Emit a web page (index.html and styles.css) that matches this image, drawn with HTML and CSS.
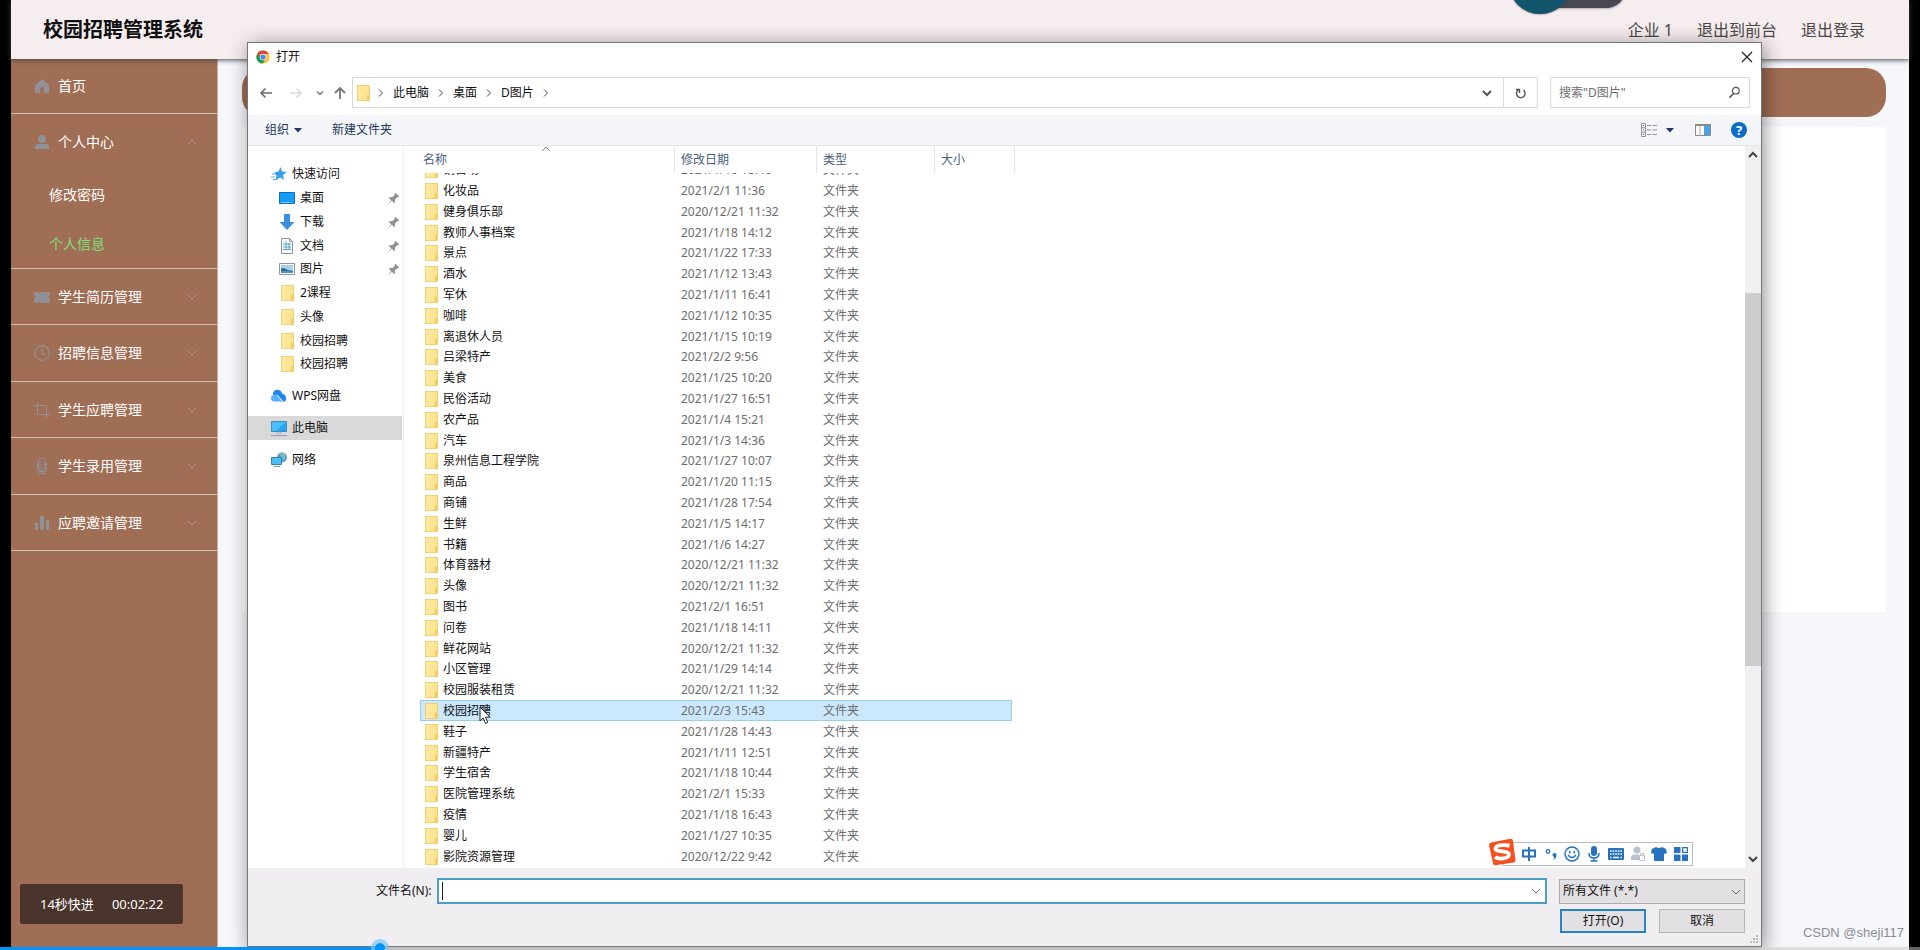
FILE: index.html
```html
<!DOCTYPE html>
<html lang="zh-CN">
<head>
<meta charset="utf-8">
<title>校园招聘管理系统</title>
<link rel="stylesheet" href="styles.css">
</head>
<body>
<svg class="defs" aria-hidden="true">
  <symbol id="down" viewBox="0 0 10 10"><path d="M1 3l4 4 4-4" fill="none" stroke="currentColor"/></symbol>
  <symbol id="up" viewBox="0 0 10 10"><path d="M1 7l4-4 4 4" fill="none" stroke="currentColor"/></symbol>
  <symbol id="right" viewBox="0 0 10 10"><path d="M3 1.500l3.500 3.500L3 8.500" fill="none" stroke="currentColor"/></symbol>
  <symbol id="tri" viewBox="0 0 10 10"><path d="M1 3h8L5 7.500z" fill="currentColor"/></symbol>
  <symbol id="pin" viewBox="0 0 12 12"><path d="M7.500.8l3.700 3.700-1 1-1-.2L7 7.500v2.800l-1 .7-2.200-2.200L.8 11.500l-.3-.3 2.700-3L1 6l.7-1h2.800L6.700 2.800l-.2-1z" fill="currentColor"/></symbol>
</svg>
<div class="site">
  <header class="topbar">
    <h1>校园招聘管理系统</h1>
    <nav class="account"><span>企业 1</span><a href="#">退出到前台</a><a href="#">退出登录</a></nav>
  </header>
  <div class="main">
    <aside class="sidebar">
      <ul class="menu">
        <li><a href="#" class="entry"><svg viewBox="0 0 16 16"><path d="M8 1L1 7v8h5v-4a2 2 0 014 0v4h5V7z" fill="currentColor"/></svg><span>首页</span></a></li>
        <li class="open">
          <a href="#" class="entry"><svg viewBox="0 0 16 16"><circle cx="8" cy="5" r="4" fill="currentColor"/><path d="M1 15v-2q0-3 3-3h8q3 0 3 3v2z" fill="currentColor"/></svg><span>个人中心</span><svg class="caret"><use href="#up"/></svg></a>
          <a href="#" class="sub">修改密码</a>
          <a href="#" class="sub active">个人信息</a>
        </li>
        <li><a href="#" class="entry"><svg viewBox="0 0 16 16"><path d="M0 3h4l1 2 1-2h10v3l-2 2 2 2v4H6l-1-2-1 2H0v-4l2-2-2-2z" fill="currentColor"/></svg><span>学生简历管理</span><svg class="caret"><use href="#down"/></svg></a></li>
        <li><a href="#" class="entry"><svg viewBox="0 0 16 16"><g fill="none" stroke="currentColor" stroke-width="1.200"><circle cx="8" cy="8" r="7.300"/><path d="M8 4v5h4"/></g></svg><span>招聘信息管理</span><svg class="caret"><use href="#down"/></svg></a></li>
        <li><a href="#" class="entry"><svg viewBox="0 0 16 16"><path d="M0 3.500h12.500V16M3.500 0v12.500H16" fill="none" stroke="currentColor"/></svg><span>学生应聘管理</span><svg class="caret"><use href="#down"/></svg></a></li>
        <li><a href="#" class="entry"><svg viewBox="0 0 16 16"><g fill="none" stroke="currentColor"><rect x="4.500" y=".5" width="7" height="12" rx="2"/><path d="M3.500 5v6q0 2.500 2.500 2.500h4q2.500 0 2.500-2.500V5M4.500 4h3M4.500 7h3M4.500 10h3M8.500 4h3M8.500 7h3M8.500 10h3M8 13v2.500M4 15.500h8"/></g></svg><span>学生录用管理</span><svg class="caret"><use href="#down"/></svg></a></li>
        <li><a href="#" class="entry"><svg viewBox="0 0 16 16"><path d="M1 8h3v7H1zM6 1h4v14H6zM12 5h3v10h-3z" fill="currentColor"/></svg><span>应聘邀请管理</span><svg class="caret"><use href="#down"/></svg></a></li>
      </ul>
    </aside>
    <main class="content">
      <div class="crumb-pill"></div>
      <div class="panel"></div>
    </main>
  </div>
</div>

<div class="widget"><span class="widget-dot"></span></div>

<section class="dialog" role="dialog" aria-label="打开">
  <div class="titlebar">
    <svg class="chrome" viewBox="0 0 16 16"><circle cx="8" cy="8" r="7.500" fill="#fbc332"/><path d="M1.500 4.200A7.500 7.500 0 007.500 15.500L10.800 10 8 8z" fill="#109d58"/><path d="M8 8L4.700 9.500 1.500 4.200A7.500 7.500 0 0114.600 4.500H8z" fill="#dc4437"/><circle cx="8" cy="8" r="3.700" fill="#f5f5f5"/><circle cx="8" cy="8" r="2.900" fill="#4a87ec"/></svg>
    <span>打开</span>
    <button class="close" aria-label="关闭"><svg viewBox="0 0 12 12"><path d="M1 1l10 10M11 1L1 11" stroke="#222" stroke-width="1.200"/></svg></button>
  </div>
  <div class="addressrow">
    <button class="nav-btn" aria-label="后退"><svg viewBox="0 0 14 14"><path d="M13 7H2M6.500 2.500L2 7l4.500 4.500" fill="none" stroke="#6b6b6b" stroke-width="1.600"/></svg></button>
    <button class="nav-btn" aria-label="前进"><svg viewBox="0 0 14 14"><path d="M1 7h11M7.500 2.500L12 7l-4.500 4.500" fill="none" stroke="#dadada" stroke-width="1.600"/></svg></button>
    <button class="nav-btn small" aria-label="历史"><svg viewBox="0 0 10 10"><path d="M2 3.500l3 3 3-3" fill="none" stroke="#777" stroke-width="1.500"/></svg></button>
    <button class="nav-btn" aria-label="上移"><svg viewBox="0 0 14 14"><path d="M7 13V2M2 7l5-5 5 5" fill="none" stroke="#777" stroke-width="1.800"/></svg></button>
    <div class="address">
      <span class="folder"></span><svg class="sep"><use href="#right"/></svg>
      <a href="#">此电脑</a><svg class="sep"><use href="#right"/></svg>
      <a href="#">桌面</a><svg class="sep"><use href="#right"/></svg>
      <a href="#">D图片</a><svg class="sep"><use href="#right"/></svg>
      <button class="drop" aria-label="以前的位置"><svg><use href="#down"/></svg></button>
      <button class="refresh" aria-label="刷新"><svg viewBox="0 0 12 12"><path d="M3.500 2.700A4.300 4.300 0 108.500 3M1 2.500h3.500V6" fill="none" stroke="#555" stroke-width="1.400"/></svg></button>
    </div>
    <div class="search">
      <input type="text" aria-label="搜索" placeholder="搜索&quot;D图片&quot;">
      <svg viewBox="0 0 14 14"><circle cx="8.500" cy="5" r="3.600" fill="none" stroke="#555" stroke-width="1.300"/><path d="M6 8l-4.500 4.500" stroke="#555" stroke-width="1.600"/></svg>
    </div>
  </div>
  <div class="toolbar">
    <button class="organize">组织<svg><use href="#tri"/></svg></button>
    <button>新建文件夹</button>
    <button class="view" aria-label="视图"><svg viewBox="0 0 16 14"><g fill="none" stroke="#909498"><path d="M.5.5h4v13h-4zM.5 4.800h4M.5 9.200h4M6 2.500h4M11.500 2.500H16M6 7h4M11.500 7H16M6 11.500h4M11.500 11.500H16"/></g><path d="M2 2h1v1H2zM2 11h1v1H2z" fill="#555"/><path d="M2 6.500h1v1H2z" fill="#d44"/></svg></button>
    <button class="viewdrop" aria-label="更多视图"><svg><use href="#tri"/></svg></button>
    <button class="preview" aria-label="预览窗格"><svg viewBox="0 0 16 12"><path d="M.5.5h15v11H.5z" fill="#fff" stroke="#8a8a8a"/><path d="M0 0h16v2H0z" fill="#8a8a8a"/><path d="M5 2v10" stroke="#aaa"/><path d="M9 2h6v9H9z" fill="#4aa3e8"/></svg></button>
    <button class="help" aria-label="帮助">?</button>
  </div>
  <div class="browser">
    <nav class="tree">
      <ul>
        <li class="root"><svg viewBox="0 0 16 16"><path d="M9.500 1l1.500 4.500 4.500.5-3.500 3 1 5-4-2.500L4.500 14.500l1-5L3 6.500l4.500-1z" fill="#35a0e8"/><path d="M1 8h4M0 11h4M2 13.500h3" stroke="#5db4ee"/></svg>快速访问</li>
        <li><svg viewBox="0 0 16 16"><path d="M.5 2.500h15v11H.5z" fill="#169bf9" stroke="#0b71bd"/><path d="M2 12.500h12" stroke="#84cbff" stroke-dasharray="9 1 1 1"/></svg>桌面<svg class="pin"><use href="#pin"/></svg></li>
        <li><svg viewBox="0 0 16 16"><path d="M5 0h6v8h4.500L8 16 .5 8H5z" fill="#3b8fdd"/></svg>下载<svg class="pin"><use href="#pin"/></svg></li>
        <li><svg viewBox="0 0 16 16"><path d="M2.500.5h8l3 3v12h-11z" fill="#fff" stroke="#8f9499"/><path d="M10.500.5v3h3" fill="none" stroke="#8f9499"/><path d="M4 6h8M4 9h8M4 11.500h8M7 3v9M10 5v7" stroke="#4aa7c8"/></svg>文档<svg class="pin"><use href="#pin"/></svg></li>
        <li><svg viewBox="0 0 16 16"><path d="M.5 2.500h15v11H.5z" fill="#fff" stroke="#8f9499"/><path d="M2 4h12v8H2z" fill="#a5d2f2"/><path d="M2 7q4 0 7 2l5 1v2H2z" fill="#376a80"/><path d="M2 10q6-1 12 1v1H2z" fill="#4c92c4"/></svg>图片<svg class="pin"><use href="#pin"/></svg></li>
        <li><span class="folder"></span>2课程</li>
        <li><span class="folder"></span>头像</li>
        <li><span class="folder"></span>校园招聘</li>
        <li><span class="folder"></span>校园招聘</li>
        <li class="root spaced"><svg viewBox="0 0 16 16"><path d="M2 7a4.500 4.500 0 019-1.500A5 5 0 0114 13.500H10L6 8z" fill="#2183ee"/><path d="M3 7q2-2 4 1l5 5.500H3.500A3.200 3.200 0 013 7" fill="#54b1ff"/><path d="M6 7l6 6.500" stroke="#fff"/></svg>WPS网盘</li>
        <li class="root spaced current"><svg viewBox="0 0 16 16"><path d="M.5 1.500h15v10H.5z" fill="#4abdfb" stroke="#438bb8"/><path d="M15 2v9H5z" fill="#26a5f4"/><path d="M0 15.500h16" stroke="#8c9fb5"/><path d="M5 13h6" stroke="#aab"/></svg>此电脑</li>
        <li class="root spaced"><svg viewBox="0 0 16 16"><circle cx="11" cy="5.500" r="5" fill="#5e9db4"/><path d="M9 2q3 1 2 4M12 1q2 3 1 7" stroke="#a7d9e8" fill="none"/><path d="M.5 5.500h10v7H.5z" fill="#49bdf7" stroke="#3482ae"/><path d="M3 14.500h6" stroke="#7695ab"/></svg>网络</li>
      </ul>
    </nav>
    <div class="listing">
      <svg class="sort"><use href="#up"/></svg>
      <table>
        <thead><tr><th>名称</th><th>修改日期</th><th>类型</th><th>大小</th></tr></thead>
        <tbody>
          <tr><td>销售场</td><td>2021/1/16 15:40</td><td>文件夹</td><td></td></tr>
          <tr><td>化妆品</td><td>2021/2/1 11:36</td><td>文件夹</td><td></td></tr>
          <tr><td>健身俱乐部</td><td>2020/12/21 11:32</td><td>文件夹</td><td></td></tr>
          <tr><td>教师人事档案</td><td>2021/1/18 14:12</td><td>文件夹</td><td></td></tr>
          <tr><td>景点</td><td>2021/1/22 17:33</td><td>文件夹</td><td></td></tr>
          <tr><td>酒水</td><td>2021/1/12 13:43</td><td>文件夹</td><td></td></tr>
          <tr><td>军休</td><td>2021/1/11 16:41</td><td>文件夹</td><td></td></tr>
          <tr><td>咖啡</td><td>2021/1/12 10:35</td><td>文件夹</td><td></td></tr>
          <tr><td>离退休人员</td><td>2021/1/15 10:19</td><td>文件夹</td><td></td></tr>
          <tr><td>吕梁特产</td><td>2021/2/2 9:56</td><td>文件夹</td><td></td></tr>
          <tr><td>美食</td><td>2021/1/25 10:20</td><td>文件夹</td><td></td></tr>
          <tr><td>民俗活动</td><td>2021/1/27 16:51</td><td>文件夹</td><td></td></tr>
          <tr><td>农产品</td><td>2021/1/4 15:21</td><td>文件夹</td><td></td></tr>
          <tr><td>汽车</td><td>2021/1/3 14:36</td><td>文件夹</td><td></td></tr>
          <tr><td>泉州信息工程学院</td><td>2021/1/27 10:07</td><td>文件夹</td><td></td></tr>
          <tr><td>商品</td><td>2021/1/20 11:15</td><td>文件夹</td><td></td></tr>
          <tr><td>商铺</td><td>2021/1/28 17:54</td><td>文件夹</td><td></td></tr>
          <tr><td>生鲜</td><td>2021/1/5 14:17</td><td>文件夹</td><td></td></tr>
          <tr><td>书籍</td><td>2021/1/6 14:27</td><td>文件夹</td><td></td></tr>
          <tr><td>体育器材</td><td>2020/12/21 11:32</td><td>文件夹</td><td></td></tr>
          <tr><td>头像</td><td>2020/12/21 11:32</td><td>文件夹</td><td></td></tr>
          <tr><td>图书</td><td>2021/2/1 16:51</td><td>文件夹</td><td></td></tr>
          <tr><td>问卷</td><td>2021/1/18 14:11</td><td>文件夹</td><td></td></tr>
          <tr><td>鲜花网站</td><td>2020/12/21 11:32</td><td>文件夹</td><td></td></tr>
          <tr><td>小区管理</td><td>2021/1/29 14:14</td><td>文件夹</td><td></td></tr>
          <tr><td>校园服装租赁</td><td>2020/12/21 11:32</td><td>文件夹</td><td></td></tr>
          <tr class="selected"><td>校园招聘<svg class="cursor" viewBox="0 0 12 19"><path d="M1 1v14l3.200-3 2.300 5.500 2.300-1-2.300-5.300H11z" fill="#fff" stroke="#222"/></svg></td><td>2021/2/3 15:43</td><td>文件夹</td><td></td></tr>
          <tr><td>鞋子</td><td>2021/1/28 14:43</td><td>文件夹</td><td></td></tr>
          <tr><td>新疆特产</td><td>2021/1/11 12:51</td><td>文件夹</td><td></td></tr>
          <tr><td>学生宿舍</td><td>2021/1/18 10:44</td><td>文件夹</td><td></td></tr>
          <tr><td>医院管理系统</td><td>2021/2/1 15:33</td><td>文件夹</td><td></td></tr>
          <tr><td>疫情</td><td>2021/1/18 16:43</td><td>文件夹</td><td></td></tr>
          <tr><td>婴儿</td><td>2021/1/27 10:35</td><td>文件夹</td><td></td></tr>
          <tr><td>影院资源管理</td><td>2020/12/22 9:42</td><td>文件夹</td><td></td></tr>
        </tbody>
      </table>
    </div>
    <div class="scrollbar">
      <svg><use href="#up"/></svg>
      <div class="track"><div class="thumb"></div></div>
      <svg><use href="#down"/></svg>
    </div>
  </div>
  <div class="footer">
    <div class="filerow">
      <label for="fname">文件名(N):</label>
      <div class="combo"><span class="caret-bar"></span><input id="fname" type="text"><svg><use href="#down"/></svg></div>
      <div class="filter"><select aria-label="文件类型"><option>所有文件 (*.*)</option></select><svg><use href="#down"/></svg></div>
    </div>
    <div class="actions"><button class="primary">打开(O)</button><button>取消</button></div>
    <svg class="grip" viewBox="0 0 9 9"><path d="M6 0h2v2H6zM3 3h2v2H3zM6 3h2v2H6zM0 6h2v2H0zM3 6h2v2H3zM6 6h2v2H6z" fill="#bcbcbc"/></svg>
  </div>
</section>

<div class="ime">
  <svg class="ime-logo" viewBox="0 0 28 28"><path d="M3 4.500L22.500.8q2-.3 2.400 1.600L27.500 22q.2 2-1.700 2.400L7.500 27.300q-2 .3-2.500-1.700L1 7q-.3-2 2-2.500z" fill="#f4511e"/><path d="M21.500 7.500Q8 6 7.500 10.500C7 14.500 21 12 21 16.500 21 21 10 21.500 7 19" fill="none" stroke="#fff" stroke-width="3.800"/></svg>
  <svg viewBox="0 0 16 16"><path d="M2 4.500h12v6H2zM8 1v14" fill="none" stroke="currentColor" stroke-width="2"/></svg>
  <svg viewBox="0 0 16 16"><circle cx="5" cy="5.500" r="1.800" fill="none" stroke="currentColor" stroke-width="1.300"/><path d="M9.500 9a2 2 0 114 0q0 4-3.500 5 1.500-1.500 1.300-3-1.800-.3-1.800-2z" fill="currentColor"/></svg>
  <svg viewBox="0 0 16 16"><g fill="none" stroke="currentColor" stroke-width="1.500"><circle cx="8" cy="8" r="7"/><path d="M4 9q4 5 8 0"/></g><path d="M5 5h1.500v2.500H5zM9.500 5H11v2.500H9.500z" fill="currentColor"/></svg>
  <svg viewBox="0 0 16 16"><rect x="5" y="0" width="6" height="10" rx="3" fill="currentColor"/><path d="M3 7q0 5 5 5t5-5M8 12v3M4.500 15h7" fill="none" stroke="currentColor" stroke-width="1.500"/></svg>
  <svg viewBox="0 0 16 16"><rect x="0" y="2" width="16" height="12" rx="1" fill="currentColor"/><path d="M2 5h12M2 8h12" stroke="#fff" stroke-width="1.600" stroke-dasharray="1.600 1"/><path d="M2 11.500h1.500M5 11.500h6M12.500 11.500H14" stroke="#fff" stroke-width="1.300"/></svg>
  <svg class="muted" viewBox="0 0 16 16"><circle cx="7" cy="4" r="3.500" fill="currentColor"/><path d="M1 14V12q0-3.500 3.500-3.500H9V14z" fill="currentColor"/><path d="M9.500 9.500h5v5h-5zM10.500 9V7.500h3V9" fill="#fff" stroke="currentColor"/></svg>
  <svg viewBox="0 0 16 16"><path d="M1 3l4-2q3 2 6 0l4 2 1 4-3 1v7H3V8L0 7z" fill="currentColor"/></svg>
  <svg viewBox="0 0 16 16"><path d="M1 1h6.500v6H1zM1 8.500h6.500v6.500H1zM9 8.500h6v6.500H9z" fill="currentColor"/><path d="M9.700 1.700h4.600v4.600H9.700z" fill="none" stroke="currentColor" stroke-width="1.300"/></svg>
</div>

<div class="toast"><span>14秒快进</span><span>00:02:22</span></div>
<div class="watermark">CSDN @sheji117</div>
<div class="progress"><div class="played"></div></div>
</body>
</html>
```

FILE: styles.css
```css
*, *::before, *::after { box-sizing: border-box; }
body {
  margin: 0;
  height: 100vh;
  position: relative;
  overflow: hidden;
  background: #000;
  font-family: "Noto Sans", "Noto Sans CJK SC", sans-serif;
  font-size: 12px;
  line-height: 16px;
  color: #111;
}
a { color: inherit; text-decoration: none; }
button {
  font: inherit;
  color: inherit;
  border: 0;
  padding: 0;
  background: none;
  display: flex;
  align-items: center;
  justify-content: center;
}
input, select { font: inherit; color: inherit; }
ul { list-style: none; margin: 0; padding: 0; }
svg { display: block; flex: none; width: 10px; height: 10px; }
.defs { position: absolute; width: 0; height: 0; }

/* site behind the dialog */
.site { height: 100%; margin: 0 11px; display: flex; flex-direction: column; background: #f6f7fb; isolation: isolate; }
.topbar {
  height: 59px;
  flex: none;
  display: flex;
  align-items: center;
  justify-content: space-between;
  padding: 0 44px 0 32px;
  background: #f6edef;
  box-shadow: 0 1px 5px #444;
  z-index: 1;
}
.topbar h1 { margin: 0; font-size: 20px; line-height: 28px; font-weight: 700; }
.account { display: flex; gap: 24px; font-size: 16px; line-height: 24px; color: #4c4848; }
.main { flex: 1; display: flex; min-height: 0; }
.sidebar { width: 207px; flex: none; background: #a06e55; border-right: 1px solid #c9b0a4; }
.menu li { border-bottom: 1px solid #d5c0b6; }
.entry {
  height: 56px;
  display: flex;
  align-items: center;
  gap: 8px;
  padding: 0 20px 0 23px;
  font-size: 14px;
  line-height: 20px;
  color: #fff;
}
.menu li:nth-child(odd) .entry { height: 55px; }
.menu li:first-child .entry { height: 54px; }
.entry svg { width: 16px; height: 16px; color: #8f9196; }
.entry .caret { width: 10px; height: 10px; margin-left: auto; color: #a99a94; }
.sub {
  display: flex;
  height: 49px;
  align-items: center;
  padding-left: 38px;
  font-size: 14px;
  color: #fff;
}
.sub.active { color: #7be07b; }
.content { flex: 1; padding: 9px 23px 0 24px; }
.crumb-pill { height: 49px; border-radius: 20px; background: #a06e55; margin-bottom: 10px; }
.panel { height: 485px; background: #fff; }

/* floating recorder pill at the top edge */
.widget {
  position: absolute;
  top: -32px;
  right: 294px;
  width: 110px;
  height: 40px;
  border-radius: 20px;
  background: #464852;
  box-shadow: 0 0 3px #777;
}
.widget-dot {
  position: absolute;
  left: -7px;
  bottom: -6px;
  width: 62px;
  height: 62px;
  border-radius: 50%;
  background: #12546b;
  box-shadow: 0 0 2px #333;
}

/* file dialog */
.dialog {
  position: absolute;
  top: 42px;
  left: 247px;
  right: 158px;
  bottom: 3px;
  display: flex;
  flex-direction: column;
  background: #fff;
  border: 1px solid #77757a;
  box-shadow: 2px 3px 18px rgba(0, 0, 0, .45);
}
.titlebar { height: 27px; flex: none; display: flex; align-items: center; gap: 6px; padding: 0 8px; }
.chrome { width: 14px; height: 14px; }
.close { width: 12px; height: 12px; margin-left: auto; }
.close svg { width: 12px; height: 12px; }
.addressrow { display: flex; align-items: center; padding: 7px 11px; flex: none; }
.nav-btn { width: 14px; height: 14px; margin-right: 16px; }
.nav-btn svg { width: 14px; height: 14px; }
.nav-btn.small { width: 10px; margin-right: 8px; margin-left: -4px; }
.nav-btn.small svg { width: 10px; height: 10px; }
.nav-btn.small + .nav-btn { margin-right: 5px; }
.address {
  flex: 1;
  height: 31px;
  display: flex;
  align-items: center;
  border: 1px solid #d9d9d9;
  padding-left: 4px;
  margin-right: 12px;
}
.sep { margin: 0 6px; color: #444; }
.address a { padding: 0 1px; }
.drop { margin-left: auto; width: 32px; height: 29px; color: #555; stroke-width: 2px; }
.refresh { width: 34px; height: 29px; border-left: 1px solid #d9d9d9; }
.refresh svg { width: 12px; height: 12px; }
.folder, tbody td:first-child::before {
  content: "";
  flex: none;
  width: 13px;
  height: 16px;
  border: 1px solid #efd070;
  background: linear-gradient(#f4cb5c, #f4cb5c) right bottom / 2px 5px no-repeat, linear-gradient(100deg, #ffeaa4, #ffe18a);
}
.search {
  width: 200px;
  height: 31px;
  border: 1px solid #d9d9d9;
  display: flex;
  align-items: center;
  padding: 0 8px;
}
.search input { flex: 1; min-width: 0; border: 0; padding: 0; outline: 0; background: none; }
.search input::placeholder { color: #6d6d6d; opacity: 1; }
.search svg { width: 13px; height: 13px; }
.toolbar {
  height: 31px;
  flex: none;
  display: flex;
  align-items: center;
  padding: 0 14px 0 17px;
  background: #f4f5f8;
  border-bottom: 1px solid #e6e7ea;
  color: #1e395b;
}
.organize { gap: 4px; margin-right: 29px; }
.view { margin-left: auto; }
.view svg { width: 16px; height: 14px; }
.viewdrop { margin: 0 20px 0 8px; }
.preview { margin-right: 20px; }
.preview svg { width: 16px; height: 12px; }
.help {
  width: 16px;
  height: 16px;
  border-radius: 50%;
  background: #0a6cc8;
  color: #fff;
  font-size: 13px;
  font-weight: 700;
}
.browser { flex: 1; min-height: 0; display: flex; }
.tree { width: 156px; flex: none; border-right: 1px solid #f0f0f0; padding: 16px 1px 0 0; }
.tree li { height: 24px; display: flex; align-items: center; gap: 5px; padding: 0 2px 0 31px; }
.tree li:nth-child(4n) { height: 23px; }
.tree li .folder { margin: 0 1px 0 2px; }
.tree li svg { width: 16px; height: 16px; }
.tree li.root { padding-left: 23px; }
.tree li.root:nth-child(n) { height: 24px; }
.tree li.spaced { margin-top: 8px; }
.tree li.current { background: #d9d9d9; }
.tree li .pin { width: 12px; height: 12px; margin-left: auto; color: #8d9499; }
.listing { flex: 1; min-width: 0; position: relative; padding-left: 16px; overflow: hidden; }
.sort { position: absolute; left: 137px; top: -2px; color: #888; }
table { display: flex; flex-direction: column; height: 100%; }
tr { display: grid; grid-template-columns: 255px 142px 118px 80px; width: 595px; }
thead { display: block; flex: none; }
th {
  height: 27px;
  padding: 4px 0 0 6px;
  text-align: left;
  font-weight: 400;
  line-height: 20px;
  color: #4c607a;
  border-right: 1px solid #e5e5e5;
}
th:first-child { padding-left: 3px; }
tbody { flex: 1; min-height: 0; overflow: hidden; display: flex; flex-direction: column; justify-content: flex-end; padding-bottom: 1px; }
tbody tr { height: 21px; flex: none; }
tbody tr:nth-child(5n) { height: 20px; }
td { padding: 0 0 0 6px; display: flex; align-items: center; color: #6d6d6d; }
td:first-child { gap: 5px; padding-left: 5px; color: #111; position: relative; }
.selected { width: 592px; background: #cce8ff; box-shadow: inset 0 0 0 1px #99cdef; }
.cursor { position: absolute; left: 59px; top: 6px; width: 12px; height: 19px; z-index: 1; }
.scrollbar { width: 16px; flex: none; display: flex; flex-direction: column; align-items: center; padding: 4px 0; background: #f0eff1; color: #444; stroke-width: 2px; }
.track { flex: 1; width: 100%; padding-top: 133px; }
.thumb { height: 373px; background: #cdcdcd; }
.footer { position: relative; flex: none; padding: 10px 16px 13px 128px; background: #f0eef0; }
.filerow { display: flex; align-items: center; height: 26px; margin-bottom: 5px; }
.filerow label { margin-right: 5px; }
.combo { flex: 1; height: 26px; display: flex; align-items: center; padding: 0 4px 0 3px; background: #fff; border: 2px solid #4d9dc4; margin-right: 12px; color: #777; }
.caret-bar { width: 1px; height: 18px; background: #222; }
.combo input { flex: 1; border: 0; outline: 0; padding: 0; background: none; }
.filter { position: relative; width: 186px; height: 25px; }
.filter select { width: 100%; height: 100%; appearance: none; border: 1px solid #adadad; border-radius: 0; background: #e2e0e2; padding: 0 3px; }
.filter svg { position: absolute; right: 4px; top: 8px; color: #666; }
.actions { display: flex; justify-content: flex-end; gap: 13px; }
.actions button { width: 86px; height: 24px; background: #e2e0e2; border: 1px solid #b5b5b5; }
.actions .primary { border: 2px solid #2684c2; }
.grip { position: absolute; right: 2px; bottom: 2px; width: 9px; height: 9px; }

/* input-method bar */
.ime {
  position: absolute;
  left: 1502px;
  top: 842px;
  height: 24px;
  width: 191px;
  display: flex;
  align-items: center;
  justify-content: space-between;
  padding: 0 3px 0 18px;
  background: #fff;
  border: 1px solid #b9bcc6;
  color: #2472c0;
}
.ime svg { width: 16px; height: 16px; }
.ime .ime-logo { position: absolute; left: -15px; top: -5px; width: 28px; height: 28px; }
.ime .muted { color: #b9c0d2; }

/* player overlay */
.toast {
  position: absolute;
  left: 20px;
  bottom: 26px;
  display: flex;
  gap: 18px;
  padding: 10px 20px;
  border-radius: 2px;
  background: #4a342c;
  color: #fff;
  font-size: 13px;
  line-height: 20px;
}
.watermark {
  position: absolute;
  right: 16px;
  bottom: 8px;
  font-family: "Liberation Sans", sans-serif;
  font-size: 13px;
  line-height: 18px;
  color: #8c8c92;
}
.progress { position: absolute; left: 0; right: 0; bottom: 0; height: 3px; background: rgba(200, 200, 200, .5); }
.played { position: relative; width: 380px; height: 3px; background: #0094fb; }
.played::after {
  content: "";
  position: absolute;
  right: -9px;
  top: -8px;
  width: 18px;
  height: 18px;
  border-radius: 50%;
  border: 4px solid rgba(120, 195, 245, .7);
  background: #0094fb;
  background-clip: padding-box;
}
```
